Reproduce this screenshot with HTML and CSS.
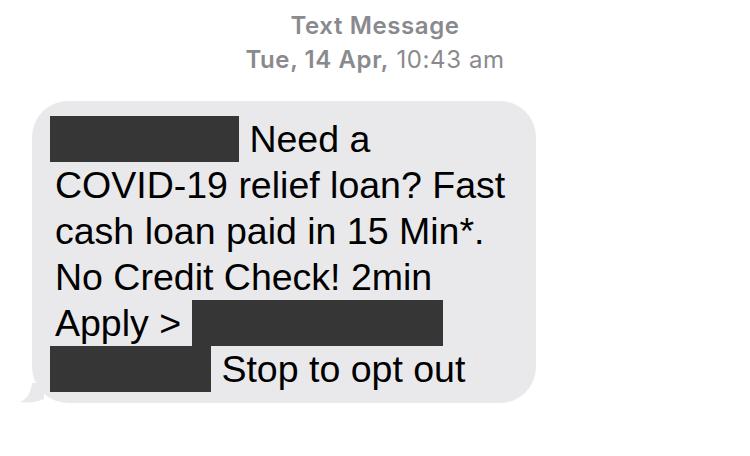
FILE: index.html
```html
<!DOCTYPE html>
<html>
<head>
<meta charset="utf-8">
<link rel="stylesheet" href="styles.css">
</head>
<body>
<div class="header">
  <div class="title">Text Message</div>
  <div class="date"><b>Tue, 14 Apr,</b> 10:43 am</div>
</div>
<div class="thread">
  <div class="bubble">
    <svg class="tail" width="24" height="20" viewBox="0 0 24 20"><path d="M24 0 L24 16 C18 19 10 20 0 19 C7 16 11 10 12 0 Z" fill="#e9e9eb"/></svg>
    <div class="line"><span class="redact r1"></span> Need a</div>
    <div class="line">COVID-19 relief loan? Fast</div>
    <div class="line">cash loan paid in 15 Min*.</div>
    <div class="line">No Credit Check! 2min</div>
    <div class="line">Apply &gt; <span class="redact r2"></span></div>
    <div class="line"><span class="redact r3"></span> Stop to opt out</div>
  </div>
</div>
</body>
</html>
```
FILE: styles.css
```css
html, body { margin: 0; padding: 0; background: #fff; }
body { font-family: "Liberation Sans", Arial, sans-serif; width: 750px; height: 456px; overflow: hidden; }
.header { text-align: center; color: #8a8a8e; font-family: Inter, "Liberation Sans", sans-serif; font-size: 24px; line-height: 34px; padding-top: 9px; }
.title { font-weight: 600; letter-spacing: 0.6px; }
.date { letter-spacing: 0.6px; }
.date b { font-weight: 600; }
.thread { padding: 0 0 0 32px; margin-top: 24px; }
.bubble { position: relative; width: 504px; box-sizing: border-box; background: #e9e9eb; border-radius: 36px; padding: 15px 0 11px 23px; color: #000; font-size: 37.5px; line-height: 46px; }
.line { height: 46px; white-space: nowrap; }
.redact { display: inline-block; background: #363636; height: 46px; vertical-align: top; margin-left: -5px; }
.r1 { width: 189px; }
.r2 { width: 251px; margin-left: 0; }
.r3 { width: 161px; }
.tail { position: absolute; left: -12px; bottom: 0; }
```
